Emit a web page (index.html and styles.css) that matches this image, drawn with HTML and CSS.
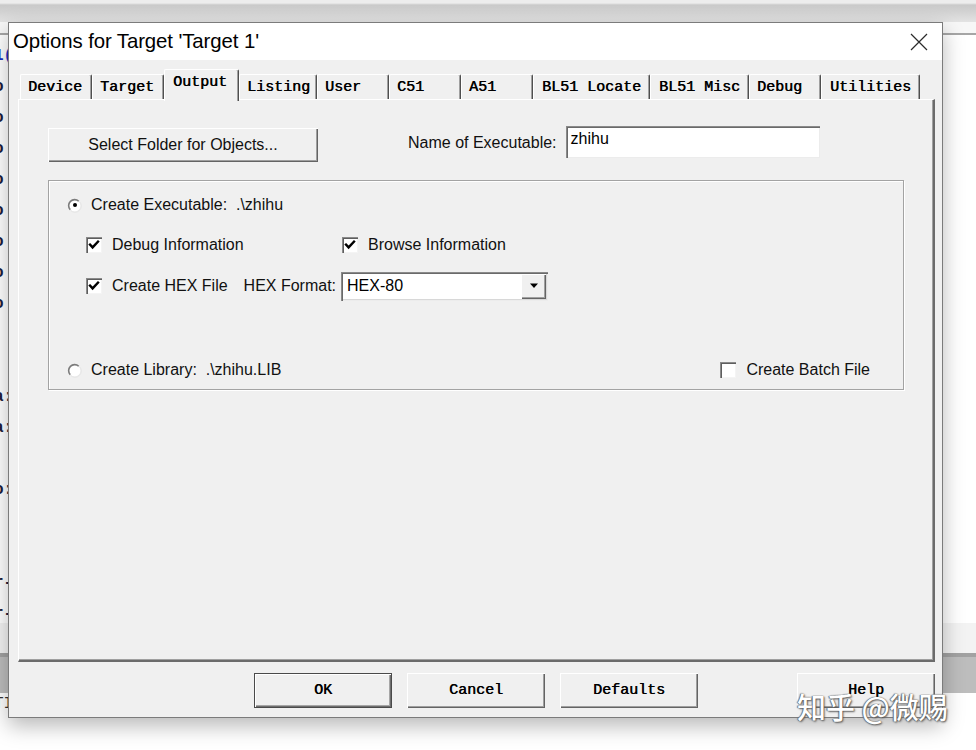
FILE: index.html
```html
<!DOCTYPE html>
<html lang="en">

<head>
    <meta charset="UTF-8">
    <meta name="viewport" content="width=device-width, initial-scale=1.0">
    <title>Options for Target 'Target 1'</title>

    <link rel="stylesheet" href="styles.css">
</head>

<body>
    <svg class="Defs" width="0" height="0" aria-hidden="true">
        <symbol id="tick" viewBox="0 0 16 16">
            <path d="M4 7.6 L6.6 10.4 L12 4.6" fill="none" stroke="#000" stroke-width="2.4" stroke-linecap="square" stroke-linejoin="miter" />
        </symbol>
        <symbol id="radio" viewBox="0 0 15 15">
            <circle cx="7.5" cy="7.5" r="6" fill="#fff" />
            <path d="M3.26 11.74 A6 6 0 0 1 11.74 3.26" fill="none" stroke="#7c7c7c" stroke-width="1.6" />
            <path d="M3.6 12.4 A6 6 0 0 0 12.4 3.6" fill="none" stroke="#e4e4e4" stroke-width="1" />
        </symbol>
    </svg>

    <div class="Screen">
        <!-- the IDE behind the dialog -->
        <div class="App">
            <div class="App-top"></div>
            <div class="App-toolbar"></div>
            <div class="App-editor">
                <div class="App-line is-keyword">1(</div>
                <div class="App-line">o</div>
                <div class="App-line">o</div>
                <div class="App-line">o</div>
                <div class="App-line">o</div>
                <div class="App-line">o</div>
                <div class="App-line">o</div>
                <div class="App-line">o</div>
                <div class="App-line">o</div>
                <div class="App-line"></div>
                <div class="App-line"></div>
                <div class="App-line">a:</div>
                <div class="App-line">a:</div>
                <div class="App-line"></div>
                <div class="App-line">o:</div>
                <div class="App-line"></div>
                <div class="App-line"></div>
                <div class="App-line">r-</div>
                <div class="App-line">r-</div>
            </div>
            <div class="App-panel"></div>
            <div class="App-status"></div>
            <div class="App-foot">TI</div>
        </div>

        <!-- dialog window -->
        <div class="Dialog">
            <div class="Dialog-title">
                <span class="Dialog-caption">Options for Target 'Target 1'</span>
                <svg class="Dialog-close" width="18" height="18" viewBox="0 0 18 18">
                    <path d="M1 1 L17 17 M17 1 L1 17" stroke="#2b2b2b" stroke-width="1.2" />
                </svg>
            </div>

            <div class="Dialog-body">
                <div class="Tabs">
                    <div class="Tab">Device</div>
                    <div class="Tab">Target</div>
                    <div class="Tab is-active">Output</div>
                    <div class="Tab Tab--tight">Listing</div>
                    <div class="Tab">User</div>
                    <div class="Tab">C51</div>
                    <div class="Tab">A51</div>
                    <div class="Tab Tab--wide">BL51 Locate</div>
                    <div class="Tab Tab--wide">BL51 Misc</div>
                    <div class="Tab">Debug</div>
                    <div class="Tab Tab--wide">Utilities</div>
                </div>

                <div class="Panel">
                    <div class="Panel-head">
                        <div class="Button Button--folder">Select Folder for Objects...</div>
                        <span class="Panel-label">Name of Executable:</span>
                        <div class="Field">zhihu</div>
                    </div>

                    <div class="Group">
                        <div class="Option">
                            <span class="Radio"><svg width="15" height="15"><use href="#radio" /></svg><i class="Radio-dot"></i></span>
                            <span>Create Executable:&nbsp; .\zhihu</span>
                        </div>

                        <div class="Option Option--sub Option--pair">
                            <div class="Option-item">
                                <span class="Check"><svg width="16" height="16"><use href="#tick" /></svg></span>
                                <span>Debug Information</span>
                            </div>
                            <div class="Option-item">
                                <span class="Check"><svg width="16" height="16"><use href="#tick" /></svg></span>
                                <span>Browse Information</span>
                            </div>
                        </div>

                        <div class="Option Option--sub Option--hex">
                            <span class="Check"><svg width="16" height="16"><use href="#tick" /></svg></span>
                            <span>Create HEX File</span>
                            <span class="Option-label">HEX Format:</span>
                            <div class="Select">
                                <span class="Select-value">HEX-80</span>
                                <span class="Select-arrow"><svg width="10" height="6" viewBox="0 0 10 6"><path d="M1 0.5 H9 L5 5 Z" fill="#000" /></svg></span>
                            </div>
                        </div>

                        <div class="Option Option--last">
                            <span class="Radio"><svg width="15" height="15"><use href="#radio" /></svg></span>
                            <span>Create Library:&nbsp; .\zhihu.LIB</span>
                            <div class="Option-item Option-item--right">
                                <span class="Check"></span>
                                <span>Create Batch File</span>
                            </div>
                        </div>
                    </div>
                </div>

                <div class="Actions">
                    <div class="Button Button--mono Button--default">OK</div>
                    <div class="Button Button--mono">Cancel</div>
                    <div class="Button Button--mono">Defaults</div>
                    <div class="Button Button--mono Button--help">Help</div>
                </div>
            </div>
        </div>

        <div class="Watermark">知乎 @微赐</div>
    </div>
</body>

</html>
```

FILE: styles.css
```css
* {
    box-sizing: border-box;
}

body {
    margin: 0;
    background: #ffffff;
    font-family: "Liberation Sans", Arial, sans-serif;
}

.Defs {
    position: absolute;
}

.Screen {
    position: relative;
    width: 976px;
    height: 750px;
    overflow: hidden;
    background: #ffffff;
}

/* background application */

.App {
    display: flex;
    flex-direction: column;
    height: 100%;
}

.App-top {
    height: 22px;
    background: linear-gradient(#ededed 0, #ededed 3px, #c9c9c9 5px, #d3d3d3 12px, #e3e3e3 22px);
}

.App-toolbar {
    height: 13px;
    background: #f7f7f7;
    border-bottom: 2px solid #a6a6a6;
}

.App-editor {
    flex: 1;
    padding-top: 6px;
    font: bold 16px/31px "Liberation Mono", monospace;
    color: #1d1d3d;
    overflow: hidden;
}

.App-line {
    height: 31px;
    margin-left: -6px;
    white-space: pre;
}

.App-line.is-keyword {
    color: #1a2fc4;
}

.App-panel {
    height: 30px;
    background: #f3f3f3;
}

.App-status {
    height: 40px;
    background: #bdbdbd;
    border-top: 4px solid #a2a2a2;
}

.App-foot {
    height: 57px;
    padding-top: 2px;
    margin-left: -6px;
    font: 16px "Liberation Mono", monospace;
    color: #333333;
}

/* dialog */

.Dialog {
    position: absolute;
    left: 8px;
    top: 22px;
    width: 935px;
    height: 696px;
    display: flex;
    flex-direction: column;
    background: #f0f0f0;
    border: 1px solid #7b7b7b;
    box-shadow: 0 8px 20px rgba(0, 0, 0, 0.28);
}

.Dialog-title {
    height: 37px;
    display: flex;
    align-items: center;
    justify-content: space-between;
    padding: 0 14px 0 4px;
    background: #ffffff;
}

.Dialog-caption {
    font-size: 20.4px;
    color: #000000;
    letter-spacing: -0.1px;
}

.Dialog-body {
    flex: 1;
    padding: 9px 7px 0 9px;
}

/* tabs */

.Tabs {
    display: flex;
    align-items: flex-end;
    height: 30px;
    margin-left: 2px;
}

.Tab {
    min-width: 72px;
    height: 25px;
    padding: 0 7px;
    font: 15px/25px "Liberation Mono", monospace;
    color: #000000;
    text-shadow: 0.5px 0 0 #000000;
    white-space: pre;
    background: #f0f0f0;
    border-top: 1px solid #ffffff;
    border-left: 1px solid #ffffff;
    border-right: 1px solid #4f4f4f;
    box-shadow: inset -1px 0 0 #a0a0a0;
    border-radius: 2px 2px 0 0;
}

.Tab--tight {
    padding-right: 6px;
}

.Tab--wide {
    padding: 0 8px;
}

.Tab.is-active {
    position: relative;
    z-index: 2;
    min-width: 75px;
    height: 32px;
    margin-bottom: -2px;
    padding: 0 8px 0 8px;
    line-height: 26px;
}

.Panel {
    height: 563px;
    padding: 28px 0 0 29px;
    background: #f0f0f0;
    border-top: 1px solid #ffffff;
    border-left: 1px solid #ffffff;
    border-right: 2px solid #6b6b6b;
    border-bottom: 2px solid #6b6b6b;
    box-shadow: inset -1px -1px 0 #a0a0a0;
}

.Panel-head {
    display: flex;
    align-items: flex-start;
    font-size: 16px;
}

.Panel-label {
    margin: 6px 0 0 90px;
    line-height: 18px;
    color: #111111;
}

.Field {
    width: 254px;
    height: 32px;
    margin: -2px 0 0 9px;
    padding: 4px 0 0 5px;
    background: #ffffff;
    line-height: 18px;
    color: #000000;
    box-shadow: inset 1px 1px 0 #8a8a8a, inset 2px 2px 0 #6a6a6a, inset -1px -1px 0 #ececec;
}

/* buttons */

.Button {
    display: flex;
    align-items: center;
    justify-content: center;
    background: #f0f0f0;
    color: #000000;
    box-shadow: inset 1px 1px 0 #ffffff, inset -1px -1px 0 #646464, inset -2px -2px 0 #9f9f9f;
}

.Button--folder {
    width: 270px;
    height: 34px;
    font-size: 16px;
    padding-bottom: 1px;
    color: #111111;
}

.Button--mono {
    width: 138px;
    height: 35px;
    font: 15px "Liberation Mono", monospace;
    color: #000000;
    text-shadow: 0.5px 0 0 #000000;
}

.Button--default {
    box-shadow: inset 0 0 0 1px #4a4a4a, inset 2px 2px 0 #ffffff, inset -2px -2px 0 #6e6e6e, inset -3px -3px 0 #a6a6a6;
}

.Button--help {
    margin-left: auto;
}

/* output options group */

.Group {
    width: 856px;
    height: 210px;
    margin-top: 18px;
    display: flex;
    flex-direction: column;
    padding: 14px 0 9px 18px;
    border: 1px solid #a3a3a3;
    box-shadow: inset 1px 1px 0 #ffffff, 1px 1px 0 #ffffff;
    font-size: 16px;
    color: #111111;
}

.Option {
    display: flex;
    align-items: center;
    height: 20px;
}

.Option--sub {
    margin-left: 19px;
    margin-top: 20px;
}

.Option--pair .Option-item:first-child {
    width: 256px;
}

.Option--hex {
    height: 30px;
    margin-top: 16px;
}

.Option--last {
    margin-top: auto;
}

.Option-item {
    display: flex;
    align-items: center;
}

.Option-item--right {
    margin: 0 33px 0 auto;
}

.Option-label {
    margin: 0 5px 0 16px;
}

.Radio {
    position: relative;
    width: 15px;
    height: 15px;
    margin-right: 9px;
}

.Radio svg {
    display: block;
}

.Radio-dot {
    position: absolute;
    left: 5.5px;
    top: 5.5px;
    width: 4px;
    height: 4px;
    border-radius: 50%;
    background: #000000;
}

.Check {
    width: 16px;
    height: 16px;
    margin-right: 10px;
    background: #ffffff;
    box-shadow: inset 1px 1px 0 #8a8a8a, inset 2px 2px 0 #5e5e5e, inset -1px -1px 0 #f4f4f4;
}

.Check svg {
    display: block;
}

.Select {
    width: 207px;
    height: 29px;
    display: flex;
    align-items: center;
    justify-content: space-between;
    padding: 2px 2px 2px 6px;
    background: #ffffff;
    box-shadow: inset 1px 1px 0 #8a8a8a, inset 2px 2px 0 #6a6a6a, inset -1px -1px 0 #ececec, inset -2px -2px 0 #d8d8d8;
    color: #000000;
}

.Select-arrow {
    width: 25px;
    height: 25px;
    display: flex;
    align-items: center;
    justify-content: center;
    background: #f0f0f0;
    box-shadow: inset 1px 1px 0 #ffffff, inset -1px -1px 0 #646464, inset -2px -2px 0 #a0a0a0;
}

/* dialog buttons */

.Actions {
    display: flex;
    gap: 15px;
    margin-top: 11px;
    padding-left: 236px;
}

.Watermark {
    position: absolute;
    left: 797px;
    top: 685px;
    font: 500 29px "Noto Sans CJK SC", sans-serif;
    color: #ffffff;
    white-space: pre;
    text-shadow: 0 0 1px #4f4f4f, 1px 1px 2px #5a5a5a, -1px 0 1px #7a7a7a;
}
```
